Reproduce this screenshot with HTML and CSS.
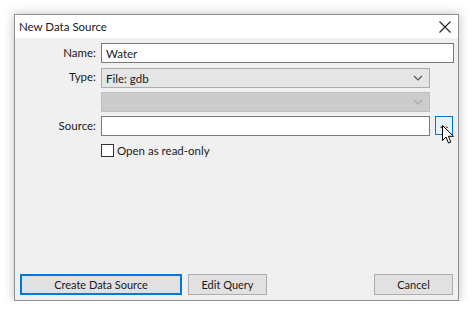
FILE: index.html
```html
<!DOCTYPE html>
<html lang="en">

<head>
    <meta charset="UTF-8">
    <title>New Data Source</title>
    <link rel="stylesheet" href="styles.css">
</head>

<body>
    <div class="dialog">
        <div class="titleBar">
            <span class="title">New Data Source</span>
            <span class="close" title="Close">
                <svg width="12" height="12" viewBox="0 0 12 12">
                    <path d="M0.5 0.5 L11.5 11.5 M11.5 0.5 L0.5 11.5" stroke="#222" stroke-width="1.1" fill="none"/>
                </svg>
            </span>
        </div>
        <div class="content">
            <div class="form">
                <label class="label">Name:</label>
                <div class="field wide"><input class="textBox" type="text" value="Water"></div>

                <label class="label">Type:</label>
                <div class="combo">
                    <span class="comboText">File: gdb</span>
                    <svg class="arrow" width="10" height="6" viewBox="0 0 10 6">
                        <path d="M1 1 L5 5 L9 1" stroke="#555" stroke-width="1.2" fill="none"/>
                    </svg>
                </div>
                <span></span>

                <span></span>
                <div class="combo disabled">
                    <span class="comboText"></span>
                    <svg class="arrow" width="10" height="6" viewBox="0 0 10 6">
                        <path d="M1 1 L5 5 L9 1" stroke="#aaa" stroke-width="1.2" fill="none"/>
                    </svg>
                </div>
                <span></span>

                <label class="label">Source:</label>
                <div class="field"><input class="textBox" type="text" value=""></div>
                <div class="browse">
                    ...
                    <svg class="cursor" width="14" height="20" viewBox="0 0 14 20">
                        <path d="M0.5 0.5 L0.5 15.5 L4 12 L6.5 18 L8.8 17 L6.4 11.3 L11.5 11.3 Z" fill="#fff" stroke="#000" stroke-width="1"/>
                    </svg>
                </div>

                <span></span>
                <label class="check"><span class="box"></span>Open as read-only</label>
                <span></span>
            </div>
            <div class="footer">
                <button class="btn default">Create Data Source</button>
                <button class="btn">Edit Query</button>
                <span class="spacer"></span>
                <button class="btn">Cancel</button>
            </div>
        </div>
    </div>
</body>

</html>
```

FILE: styles.css
```css
* {
    padding: 0;
    margin: 0;
    box-sizing: border-box;
}

body {
    background: #fff;
    font-family: Lato, "Liberation Sans", sans-serif;
    font-size: 11.5px;
    color: #1a1a1a;
}

.dialog {
    width: 445px;
    height: 287px;
    margin: 14px 0 0 14px;
    border: 1px solid #8f8f8f;
    background: #f0f0f0;
    box-shadow: 0 0 10px rgba(0, 0, 0, 0.25);
    display: flex;
    flex-direction: column;
}

.dialog .titleBar {
    height: 23px;
    background: #fff;
    display: flex;
    align-items: center;
    justify-content: space-between;
    padding: 0 7px 0 4px;
}

.dialog .title {
    font-size: 11.5px;
    line-height: 16px;
}

.dialog .close {
    display: flex;
}

.dialog .content {
    flex: 1;
    display: flex;
    flex-direction: column;
}

.form {
    display: grid;
    grid-template-columns: 81px 1fr 18px;
    column-gap: 5px;
    row-gap: 4px;
    padding: 5px 5px 0 0;
}

.form .label {
    text-align: right;
    line-height: 20px;
}

.form .field.wide {
    grid-column: span 2;
    margin-right: -1px;
}

.form .textBox {
    display: block;
    width: 100%;
    height: 20px;
    border: 1px solid #7a7a7a;
    background: #fff;
    font-family: Lato, "Liberation Sans", sans-serif;
    font-size: 11.5px;
    color: #1a1a1a;
    padding: 0 4px;
    outline: none;
}

.form .combo {
    height: 20px;
    border: 1px solid #acacac;
    background: #e5e5e5;
    display: flex;
    align-items: center;
    justify-content: space-between;
    padding: 0 6px 0 4px;
    margin-top: 1px;
}

.form .combo.disabled {
    background: #cccccc;
    border-color: #bfbfbf;
    margin-top: 0;
}

.form .browse {
    position: relative;
    height: 19px;
    border: 1px solid #0078d7;
    background: #e5f1fb;
    text-align: center;
    line-height: 14px;
    font-size: 12px;
}

.form .browse .cursor {
    position: absolute;
    left: 6px;
    top: 8px;
}

.form .check {
    display: flex;
    align-items: center;
    gap: 3px;
    height: 18px;
    margin-top: 1px;
}

.form .check .box {
    width: 13px;
    height: 13px;
    border: 1px solid #333;
    background: #fff;
}

.footer {
    margin-top: auto;
    display: flex;
    gap: 6px;
    padding: 0 5px 5px 5px;
}

.footer .spacer {
    flex: 1;
}

.btn {
    width: 79px;
    height: 21px;
    border: 1px solid #adadad;
    background: #e1e1e1;
    font-family: Lato, "Liberation Sans", sans-serif;
    font-size: 11px;
    color: #1a1a1a;
}

.btn.default {
    width: 162px;
    border: 2px solid #0078d7;
}
```
